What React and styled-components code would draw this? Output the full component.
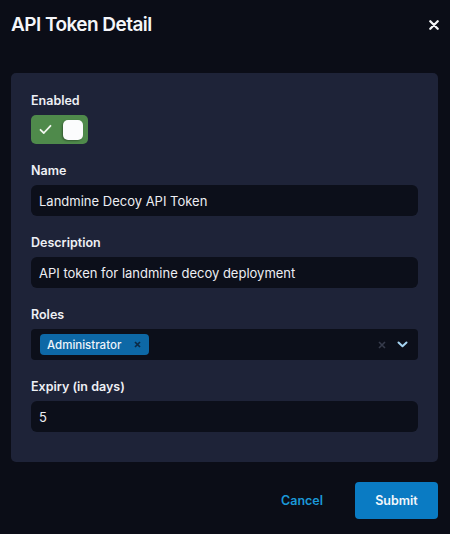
import React from "react"
import styled, { createGlobalStyle } from "styled-components"

const fields = [
  { label: "Name", value: "Landmine Decoy API Token" },
  { label: "Description", value: "API token for landmine decoy deployment" },
]

const App = () => {
  return (
    <>
      <GlobalStyle />
      <Dialog>
        <Header>
          <Title>API Token Detail</Title>
          <CloseButton aria-label="Close">
            <svg width="10" height="10" viewBox="0 0 10 10">
              <path
                d="M1.3 1.3 L8.7 8.7 M8.7 1.3 L1.3 8.7"
                stroke="#f4f5f8"
                strokeWidth="2.3"
                strokeLinecap="round"
              />
            </svg>
          </CloseButton>
        </Header>
        <Panel>
          <Field>
            <Label>Enabled</Label>
            <Toggle>
              <svg width="13" height="11" viewBox="0 0 13 11">
                <path
                  d="M1.5 5.8 L4.8 9 L11.5 1.8"
                  stroke="#f1f6ef"
                  strokeWidth="1.8"
                  fill="none"
                  strokeLinecap="round"
                  strokeLinejoin="round"
                />
              </svg>
              <Knob />
            </Toggle>
          </Field>
          {fields.map((f) => (
            <Field key={f.label}>
              <Label>{f.label}</Label>
              <Input>{f.value}</Input>
            </Field>
          ))}
          <Field>
            <Label>Roles</Label>
            <Select>
              <Chip>
                Administrator
                <ChipRemove>
                  <svg width="7" height="7" viewBox="0 0 7 7">
                    <path
                      d="M1 1 L6 6 M6 1 L1 6"
                      stroke="#0c2a45"
                      strokeWidth="1.7"
                    />
                  </svg>
                </ChipRemove>
              </Chip>
              <Indicators>
                <svg width="8" height="8" viewBox="0 0 8 8">
                  <path
                    d="M1 1 L7 7 M7 1 L1 7"
                    stroke="#363b4b"
                    strokeWidth="1.6"
                  />
                </svg>
                <svg width="11" height="7" viewBox="0 0 11 7">
                  <path
                    d="M1.5 1.5 L5.5 5.3 L9.5 1.5"
                    stroke="#a6d4f2"
                    strokeWidth="2"
                    fill="none"
                    strokeLinecap="round"
                    strokeLinejoin="round"
                  />
                </svg>
              </Indicators>
            </Select>
          </Field>
          <Field>
            <Label>Expiry (in days)</Label>
            <Input>5</Input>
          </Field>
        </Panel>
        <Footer>
          <CancelButton>Cancel</CancelButton>
          <SubmitButton>Submit</SubmitButton>
        </Footer>
      </Dialog>
    </>
  )
}

export default App

const GlobalStyle = createGlobalStyle`
  html, body {
    margin: 0;
    padding: 0;
    background: #0b0d17;
  }
  body {
    font-family: Inter, "Noto Sans", sans-serif;
    color: #eef0f5;
  }
`

const Dialog = styled.div`
  width: 450px;
  height: 534px;
  box-sizing: border-box;
  padding: 0 12px 0 11px;
  background: #0b0d17;
  display: flex;
  flex-direction: column;
`

const Header = styled.div`
  height: 48px;
  box-sizing: border-box;
  padding-top: 1px;
  display: flex;
  align-items: center;
  justify-content: space-between;
`

const Title = styled.h2`
  margin: 0;
  font-size: 19px;
  font-weight: 600;
  letter-spacing: -0.55px;
  color: #f5f6fa;
`

const CloseButton = styled.button`
  border: none;
  background: none;
  padding: 0;
  margin-right: -4px;
  width: 16px;
  height: 16px;
  display: flex;
  align-items: center;
  justify-content: center;
`

const Panel = styled.div`
  margin-top: 25px;
  background: #1e2338;
  border-radius: 5px;
  padding: 19px 20px 30px;
  display: flex;
  flex-direction: column;
  gap: 18px;
`

const Field = styled.div`
  display: flex;
  flex-direction: column;
  gap: 6px;
`

const Label = styled.label`
  font-size: 12.5px;
  line-height: 17px;
  font-weight: 600;
  color: #eef0f5;
`

const Toggle = styled.div`
  width: 57px;
  height: 29px;
  box-sizing: border-box;
  border-radius: 5px;
  background: #4f8a4b;
  display: flex;
  align-items: center;
  justify-content: space-between;
  padding: 0 5px 0 8px;
`

const Knob = styled.div`
  width: 20px;
  height: 20px;
  border-radius: 5px;
  background: #fbfcfd;
  box-shadow: -1px 1px 2px rgba(0, 0, 0, 0.35);
`

const Input = styled.div`
  height: 31px;
  box-sizing: border-box;
  border-radius: 6px;
  background: #0c0f1a;
  padding: 0 8px;
  display: flex;
  align-items: center;
  font-size: 13px;
  color: #eceef3;
`

const Select = styled.div`
  height: 31px;
  box-sizing: border-box;
  border-radius: 4px;
  background: #0c0f1a;
  padding: 0 10px 0 9px;
  display: flex;
  align-items: center;
  justify-content: space-between;
`

const Chip = styled.div`
  height: 21px;
  box-sizing: border-box;
  border-radius: 4px;
  background: #0d68a6;
  padding: 0 8px 0 7px;
  display: flex;
  align-items: center;
  gap: 13px;
  font-size: 11.5px;
  font-weight: 500;
  color: #eef4fa;
`

const ChipRemove = styled.span`
  display: flex;
  align-items: center;
`

const Indicators = styled.div`
  display: flex;
  align-items: center;
  gap: 11px;
`

const Footer = styled.div`
  margin-top: 20px;
  display: flex;
  justify-content: flex-end;
  align-items: center;
  gap: 16px;
`

const CancelButton = styled.button`
  border: none;
  background: none;
  font-family: inherit;
  font-size: 12.5px;
  font-weight: 600;
  color: #1b98d8;
  padding: 0 16px;
  height: 37px;
`

const SubmitButton = styled.button`
  border: none;
  border-radius: 4px;
  background: #0a7bc3;
  font-family: inherit;
  font-size: 12.5px;
  font-weight: 600;
  color: #f3f7fb;
  width: 83px;
  height: 37px;
`
